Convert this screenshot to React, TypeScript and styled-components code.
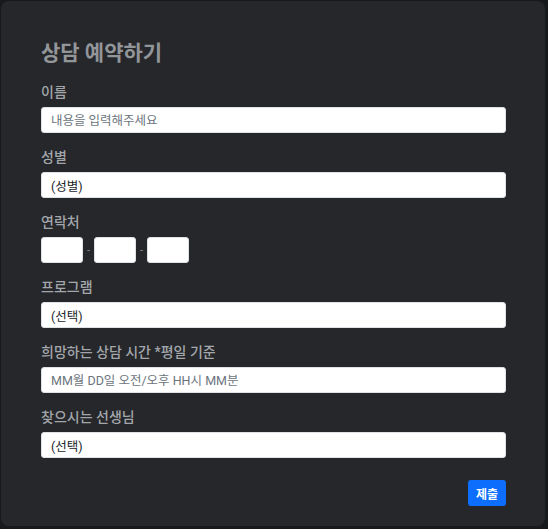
import React from "react";
import styled, { createGlobalStyle } from "styled-components";

const GlobalStyle = createGlobalStyle`
  html, body {
    margin: 0;
    padding: 0;
    background: #18191b;
  }
  body {
    font-family: Roboto, "Noto Sans CJK KR", sans-serif;
  }
`;

const Page = styled.div`
  width: 548px;
  height: 529px;
  padding: 1px 3px 3px 1px;
  box-sizing: border-box;
`;

const Card = styled.form`
  height: 100%;
  box-sizing: border-box;
  background: #25272b;
  border-radius: 8px;
  padding: 40px 39px 20px 40px;
  display: flex;
  flex-direction: column;
`;

const Title = styled.h2`
  margin: 0 0 17px;
  font-size: 21px;
  line-height: 24px;
  font-weight: 700;
  color: #939699;
`;

const Group = styled.div`
  display: flex;
  flex-direction: column;
  margin-bottom: 14px;
`;

const Label = styled.label`
  font-size: 14px;
  line-height: 20px;
  font-weight: 500;
  color: #a3a6aa;
  margin-bottom: 5px;
`;

const Field = styled.input<{ $small?: boolean }>`
  box-sizing: border-box;
  width: ${(p) => (p.$small ? "42px" : "100%")};
  height: 26px;
  border: 1px solid #dee2e6;
  border-radius: 3px;
  background: #fff;
  padding: 0 9px;
  font-family: inherit;
  font-size: 12.5px;
  color: #212529;
  outline: none;

  &::placeholder {
    color: #6c757d;
  }
`;

const Select = styled.div`
  box-sizing: border-box;
  height: 26px;
  border: 1px solid #dee2e6;
  border-radius: 3px;
  background: #fff;
  padding: 0 9px;
  display: flex;
  align-items: center;
  font-size: 12.5px;
  color: #212529;
`;

const PhoneRow = styled.div`
  display: flex;
  align-items: center;
  gap: 3px;
`;

const Dash = styled.span`
  font-size: 11px;
  color: #8a8e93;
  width: 5px;
  text-align: center;
`;

const Footer = styled.div`
  display: flex;
  justify-content: flex-end;
  margin-top: 8px;
`;

const Submit = styled.button`
  height: 26px;
  padding: 0 8px;
  border: none;
  border-radius: 3px;
  background: #0d6efd;
  color: #fff;
  font-family: inherit;
  font-size: 12px;
  font-weight: 700;
`;

export default function App() {
  return (
    <>
      <GlobalStyle />
      <Page>
        <Card onSubmit={(e) => e.preventDefault()}>
          <Title>상담 예약하기</Title>
          <Group>
            <Label>이름</Label>
            <Field placeholder="내용을 입력해주세요" />
          </Group>
          <Group>
            <Label>성별</Label>
            <Select>(성별)</Select>
          </Group>
          <Group>
            <Label>연락처</Label>
            <PhoneRow>
              <Field $small />
              <Dash>-</Dash>
              <Field $small />
              <Dash>-</Dash>
              <Field $small />
            </PhoneRow>
          </Group>
          <Group>
            <Label>프로그램</Label>
            <Select>(선택)</Select>
          </Group>
          <Group>
            <Label>희망하는 상담 시간 *평일 기준</Label>
            <Field placeholder="MM월 DD일 오전/오후 HH시 MM분" />
          </Group>
          <Group>
            <Label>찾으시는 선생님</Label>
            <Select>(선택)</Select>
          </Group>
          <Footer>
            <Submit type="submit">제출</Submit>
          </Footer>
        </Card>
      </Page>
    </>
  );
}
